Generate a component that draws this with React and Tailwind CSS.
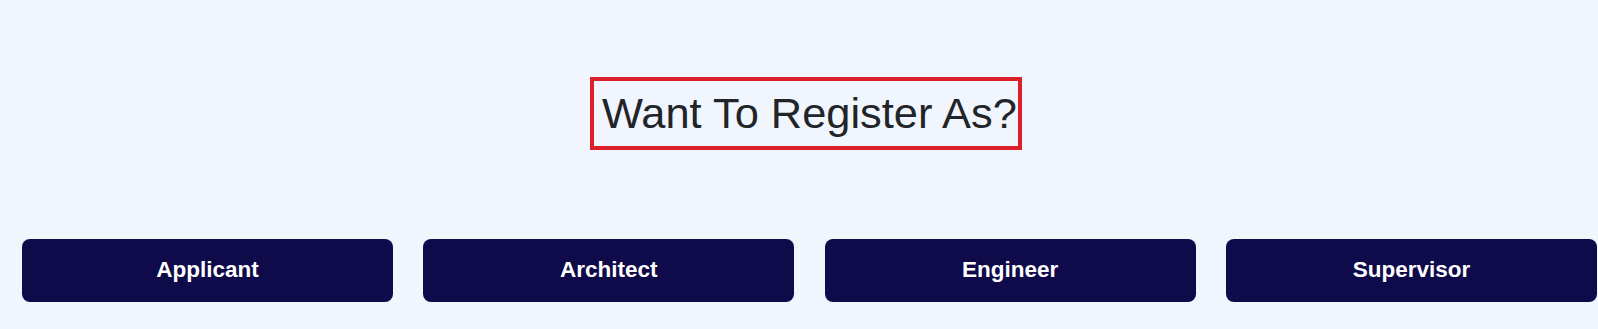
export default function App() {
  const roles = ["Applicant", "Architect", "Engineer", "Supervisor"];
  return (
    <div className="w-[1598px] h-[329px] bg-[#f1f5fe] font-['Liberation_Sans',Arial,sans-serif]">
      <div className="flex justify-center pt-[77px] pl-[14px]">
        <div className="border-[4px] border-[#dc1f2b] h-[73px] w-[432px] flex items-center justify-start pl-[8px]">
          <h1 className="text-[43.4px] leading-none text-[#212529] font-normal whitespace-nowrap">Want To Register As?</h1>
        </div>
      </div>
      <div className="grid grid-cols-4 gap-[30.5px] pl-[22px] pr-[1px] mt-[89px]">
        {roles.map((r) => (
          <button
            key={r}
            className="h-[63px] rounded-[8px] bg-[#0f0a4a] text-white font-bold text-[22.5px] flex items-center justify-center pb-[2px]"
          >
            {r}
          </button>
        ))}
      </div>
    </div>
  );
}
